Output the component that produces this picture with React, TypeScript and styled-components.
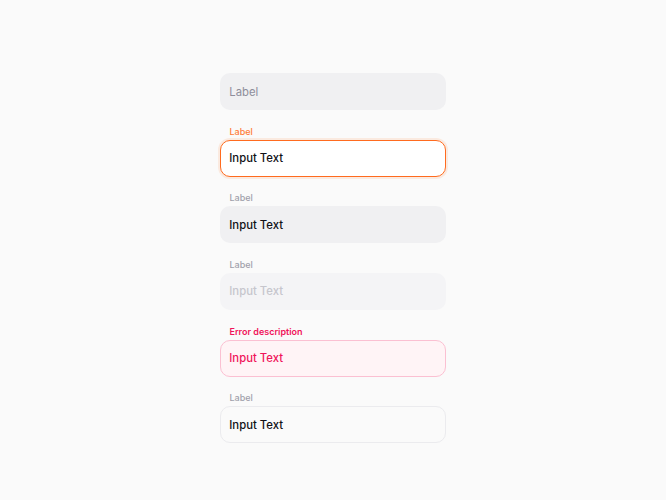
import styled, { createGlobalStyle, css } from 'styled-components';

const GlobalStyle = createGlobalStyle`
    html, body {
        margin: 0;
        padding: 0;
        background: #fafafa;
        font-family: Inter, "Noto Sans", sans-serif;
    }
`;

type Variant = 'default' | 'focus' | 'filled' | 'disabled' | 'error' | 'outline';

const Page = styled.div`
    width: 666px;
    height: 500px;
    box-sizing: border-box;
    padding-top: 73px;
    display: flex;
    justify-content: center;
`;

const Stack = styled.div`
    width: 226px;
    display: flex;
    flex-direction: column;
    gap: 15.67px;
`;

const Group = styled.div`
    display: flex;
    flex-direction: column;
    gap: 2px;
`;

const Label = styled.label<{ $variant: Variant }>`
    padding-left: 9.5px;
    font-size: 9px;
    line-height: 12px;
    font-weight: 500;
    color: #a0a0ab;
    ${(p) =>
        p.$variant === 'focus' &&
        css`
            color: #ff7a38;
        `}
    ${(p) =>
        p.$variant === 'error' &&
        css`
            color: #f0145a;
            font-weight: 600;
        `}
`;

const variants = {
    default: css`
        background: #f0f0f2;
        color: #16161d;
    `,
    focus: css`
        background: #ffffff;
        border: 1.75px solid #ff6b1f;
        box-shadow: 0 0 0 2px rgba(255, 140, 70, 0.14);
        color: #111116;
    `,
    filled: css`
        background: #f0f0f2;
        color: #111116;
    `,
    disabled: css`
        background: #f4f4f6;
        color: #c6c6cd;
    `,
    error: css`
        background: #fff4f6;
        border: 1.5px solid #fbc0d2;
        color: #f0145a;
    `,
    outline: css`
        background: #fafafa;
        border: 1.5px solid #ebebee;
        color: #111116;
    `,
};

const Field = styled.input<{ $variant: Variant }>`
    box-sizing: border-box;
    width: 100%;
    height: 37px;
    margin: 0;
    border: 1.5px solid transparent;
    border-radius: 10px;
    padding: 0 7.5px 0 8.3px;
    font-family: Inter, "Noto Sans", sans-serif;
    font-size: 11.3px;
    font-weight: 500;
    outline: none;
    ${(p) => variants[p.$variant]}

    &::placeholder {
        color: #8e8e9b;
        font-weight: 400;
    }

    &:disabled {
        -webkit-text-fill-color: #c6c6cd;
        opacity: 1;
    }
`;

const fields: { variant: Variant; label?: string; value?: string; placeholder?: string }[] = [
    { variant: 'default', placeholder: 'Label' },
    { variant: 'focus', label: 'Label', value: 'Input Text' },
    { variant: 'filled', label: 'Label', value: 'Input Text' },
    { variant: 'disabled', label: 'Label', value: 'Input Text' },
    { variant: 'error', label: 'Error description', value: 'Input Text' },
    { variant: 'outline', label: 'Label', value: 'Input Text' },
];

export default function App() {
    return (
        <>
            <GlobalStyle />
            <Page>
                <Stack>
                    {fields.map((f, i) => (
                        <Group key={i}>
                            {f.label && <Label $variant={f.variant}>{f.label}</Label>}
                            <Field
                                $variant={f.variant}
                                readOnly
                                disabled={f.variant === 'disabled'}
                                value={f.value ?? ''}
                                placeholder={f.placeholder}
                            />
                        </Group>
                    ))}
                </Stack>
            </Page>
        </>
    );
}
